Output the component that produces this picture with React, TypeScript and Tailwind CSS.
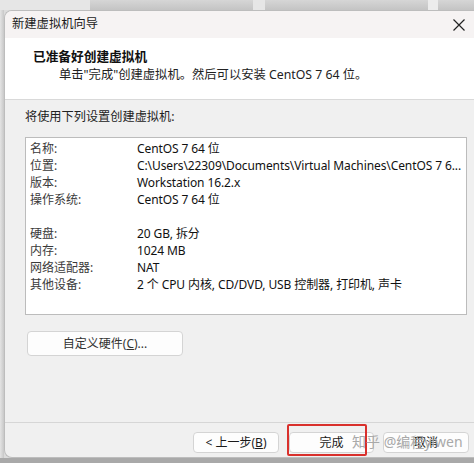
const ui = { fontFamily: '"Noto Sans", "Noto Sans CJK SC", sans-serif' };

const rows: ([string, string] | null)[] = [
  ['名称:', 'CentOS 7 64 位'],
  ['位置:', 'C:\\Users\\22309\\Documents\\Virtual Machines\\CentOS 7 6...'],
  ['版本:', 'Workstation 16.2.x'],
  ['操作系统:', 'CentOS 7 64 位'],
  null,
  ['硬盘:', '20 GB, 拆分'],
  ['内存:', '1024 MB'],
  ['网络适配器:', 'NAT'],
  ['其他设备:', '2 个 CPU 内核, CD/DVD, USB 控制器, 打印机, 声卡'],
];

function Btn({ children, className = '' }: { children: React.ReactNode; className?: string }) {
  return (
    <div
      className={`flex items-center justify-center rounded-[4px] border border-[#d4d4d4] bg-[#fdfdfd] text-[12px] text-[#1a1a1a] ${className}`}
    >
      {children}
    </div>
  );
}

export default function App() {
  return (
    <div className="w-[474px] h-[463px] overflow-hidden flex flex-col bg-[#b4b4b4]" style={ui}>
      {/* taskbar strip behind the dialog */}
      <div className="h-[10px] flex shrink-0">
        <div className="w-[90px] bg-[#e6e6e6]" />
        <div className="w-[163px] bg-gradient-to-b from-[#d6d6d6] to-[#c4c4c4]" />
        <div className="w-[12px] bg-[#e6e6e6]" />
        <div className="w-[163px] bg-gradient-to-b from-[#d6d6d6] to-[#c4c4c4]" />
        <div className="w-[10px] bg-[#ececec]" />
        <div className="flex-1 bg-gradient-to-b from-[#d6d6d6] to-[#c4c4c4]" />
      </div>

      <div className="flex h-[448px] shrink-0 bg-[#dcdcdc]">
        <div className="w-[4px] bg-gradient-to-r from-[#e4e4e4] to-[#c8c8c8]" />
        {/* dialog window */}
        <div className="flex-1 flex flex-col rounded-tl-[8px] rounded-bl-[8px] border-l border-t border-b border-[#bdbdbd] bg-[#f0f0f0] overflow-hidden">
          {/* title bar */}
          <div className="h-[27px] shrink-0 flex items-center justify-between bg-[#f6f3f3] pl-[7px] pr-[8px]">
            <span className="text-[12.3px] text-[#1b1b1b]">新建虚拟机向导</span>
            <svg width="14" height="14" viewBox="0 0 14 14" className="text-[#222]">
              <path d="M1.5 1.5 L12.5 12.5 M12.5 1.5 L1.5 12.5" stroke="currentColor" strokeWidth="1.2" />
            </svg>
          </div>

          {/* header */}
          <div className="h-[62px] shrink-0 bg-white border-b border-[#d9d9d9] pl-[28px] pt-[8px]">
            <div className="text-[12.7px] font-bold text-[#111] leading-[20px]">已准备好创建虚拟机</div>
            <div className="pl-[26px] text-[12.3px] text-[#222] leading-[18px]">
              单击"完成"创建虚拟机。然后可以安装 CentOS 7 64 位。
            </div>
          </div>

          {/* body */}
          <div className="h-[322px] shrink-0 flex flex-col pl-[20px] pr-[7px]">
            <div className="pt-[8px] h-[37px] text-[12.2px] text-[#222]">将使用下列设置创建虚拟机:</div>
            <div className="h-[178px] border border-[#bcbcbc] bg-white pt-[2px] pl-[4px]">
              {rows.map((r, i) =>
                r ? (
                  <div key={i} className="flex h-[17px] items-center text-[12px] leading-[17px]">
                    <span className="w-[107px] shrink-0 text-[#3a3a3a]">{r[0]}</span>
                    <span className="text-[#111] whitespace-nowrap tracking-[-0.1px]">{r[1]}</span>
                  </div>
                ) : (
                  <div key={i} className="h-[17px]" />
                )
              )}
            </div>
            <Btn className="mt-[16px] ml-[2px] w-[156px] h-[25px] text-[#333]">
              自定义硬件(<span className="underline">C</span>)...
            </Btn>
          </div>

          {/* footer */}
          <div className="flex-1 border-t border-[#d6d6d6] relative flex items-start pt-[9px] pl-[188px] gap-[8px]">
            <Btn className="w-[86px] h-[21px]">&lt; 上一步(<span className="underline">B</span>)</Btn>
            <Btn className="w-[85px] h-[21px] ml-[2px]">完成</Btn>
            <Btn className="w-[86px] h-[21px] ml-[1px]">取消</Btn>
            {/* red highlight box */}
            <div className="absolute left-[282px] top-[1px] w-[80px] h-[32px] border-[2.5px] border-[#d9302c] rounded-[2px]" />
            {/* watermark */}
            <div className="absolute left-[347px] top-[9px] text-[14px] leading-[20px] text-[#a9a9a9] whitespace-nowrap">
              知乎 @编程yiwen
            </div>
          </div>
        </div>
      </div>
      <div className="flex-1 bg-[#a9a9a9]" />
    </div>
  );
}
